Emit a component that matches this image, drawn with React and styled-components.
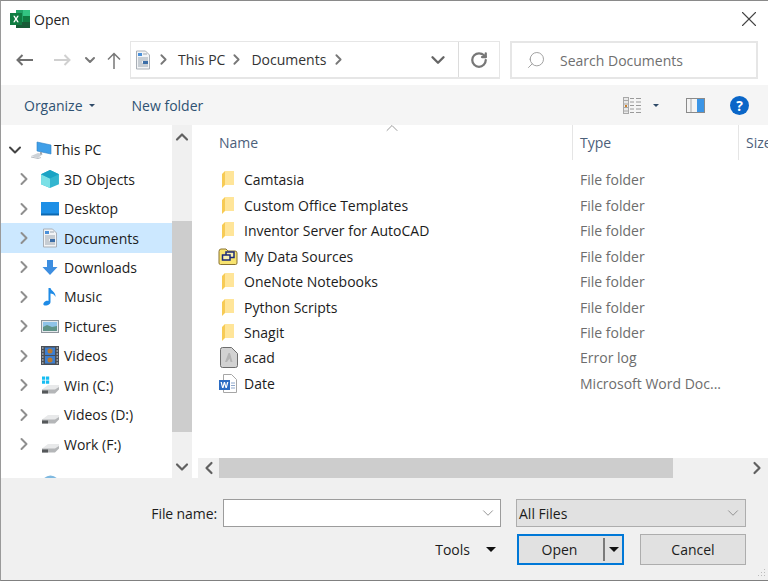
import styled, { createGlobalStyle } from 'styled-components';
import { X, ChevronDown, ChevronRight, ChevronUp, ChevronLeft, RotateCw, Search } from 'lucide-react';

const GlobalStyle = createGlobalStyle`
  html, body {
    margin: 0;
    padding: 0;
    background: #fff;
  }
  body {
    font-family: "Open Sans", "Liberation Sans", sans-serif;
    font-size: 14px;
    color: #1c1c1c;
  }
`;

const Dialog = styled.div`
  width: 768px;
  height: 581px;
  box-sizing: border-box;
  border-top: 1px solid #8a8a8a;
  border-left: 1px solid #9a9a9a;
  border-bottom: 1px solid #808080;
  display: flex;
  flex-direction: column;
  overflow: hidden;
`;

const TitleBar = styled.div`
  height: 34px;
  flex: none;
  display: flex;
  align-items: center;
  gap: 3px;
  padding: 2px 6px 0 9px;
  box-sizing: border-box;
`;

const TitleText = styled.span`
  flex: 1;
  color: #222;
`;

const NavRow = styled.div`
  height: 50px;
  flex: none;
  display: flex;
  padding: 6px 10px 6px 0;
  box-sizing: border-box;
`;

const NavButtons = styled.div`
  width: 129px;
  flex: none;
  display: flex;
  align-items: center;
  padding-left: 15px;
  box-sizing: border-box;
`;

const NavGlyph = styled.span`
  display: flex;
  margin-left: ${({ $ml }) => $ml || 0}px;
  svg {
    flex: none;
  }
`;

const AddressBar = styled.div`
  width: 370px;
  flex: none;
  display: flex;
  align-items: center;
  border: 2px solid #e6e6e6;
  border-width: 1px 1px 2px 1px;
  box-sizing: border-box;
  padding-left: 4px;
  color: #333;
`;

const CrumbSep = styled.span`
  display: flex;
  margin: 0 6px 0 ${({ $l }) => $l}px;
`;

const Spacer = styled.div`
  flex: 1;
`;

const RefreshCell = styled.div`
  width: 41px;
  height: 100%;
  border-left: 1px solid #dcdcdc;
  box-sizing: border-box;
  display: flex;
  align-items: center;
  justify-content: center;
  margin-left: 9px;
`;

const SearchBox = styled.div`
  width: 248px;
  margin-left: 10px;
  display: flex;
  align-items: center;
  gap: 14px;
  padding-left: 14px;
  border: 2px solid #e6e6e6;
  box-sizing: border-box;
  color: #6f6f6f;
`;

const Toolbar = styled.div`
  height: 40px;
  flex: none;
  background: #f5f5f5;
  display: flex;
  align-items: center;
  padding: 0 19px 0 23px;
  box-sizing: border-box;
  color: #2f5273;
`;

const ToolButton = styled.span`
  margin-right: ${({ $gap }) => $gap || 0}px;
  display: flex;
  align-items: center;
`;

const SmallCaret = styled.span`
  display: inline-block;
  width: 0;
  height: 0;
  margin-left: ${({ $ml }) => $ml || 0}px;
  border-left: ${({ $size }) => $size || 3}px solid transparent;
  border-right: ${({ $size }) => $size || 3}px solid transparent;
  border-top: ${({ $size }) => $size || 3}px solid ${({ $color }) => $color || '#2f4a68'};
`;

const Main = styled.div`
  flex: 1;
  min-height: 0;
  display: flex;
`;

const TreePane = styled.div`
  width: 171px;
  flex: none;
  overflow: hidden;
  padding-top: 10px;
  box-sizing: border-box;
`;

const TreeRow = styled.div`
  height: 29.45px;
  display: flex;
  align-items: center;
  padding-left: ${({ $top }) => ($top ? 8 : 17)}px;
  margin-top: ${({ $mt }) => $mt || 0}px;
  box-sizing: border-box;
  background: ${({ $selected }) => ($selected ? '#cce8ff' : 'transparent')};
  white-space: nowrap;
`;

const IconSlot = styled.span`
  width: ${({ $w }) => $w || 20}px;
  height: 20px;
  flex: none;
  margin-right: ${({ $mr }) => $mr || 0}px;
  display: flex;
  align-items: center;
  justify-content: ${({ $start }) => ($start ? 'flex-start' : 'center')};
  svg {
    flex: none;
  }
`;

const VScroll = styled.div`
  width: 20px;
  flex: none;
  background: #f0f0f0;
  display: flex;
  flex-direction: column;
  align-items: stretch;
  margin-right: 2px;
`;

const ScrollButton = styled.div`
  flex: none;
  height: ${({ $h }) => $h || 20}px;
  width: ${({ $w }) => $w || 'auto'};
  display: flex;
  align-items: center;
  justify-content: center;
  svg {
    flex: none;
  }
`;

const VThumb = styled.div`
  margin-top: 72px;
  height: 211px;
  background: #cdcdcd;
  flex: none;
`;

const FilePane = styled.div`
  flex: 1;
  min-width: 0;
  display: flex;
  flex-direction: column;
  position: relative;
  overflow: hidden;
`;

const SortCaret = styled.span`
  position: absolute;
  left: 188px;
  top: -7px;
`;

const HeaderRow = styled.div`
  height: 35px;
  flex: none;
  display: grid;
  grid-template-columns: 379px 166px 60px;
  color: #4c607a;
`;

const HeaderCell = styled.div`
  display: flex;
  align-items: center;
  padding-left: ${({ $pad }) => $pad}px;
  border-right: ${({ $last }) => ($last ? 'none' : '1px solid #e5e5e5')};
  box-sizing: border-box;
  white-space: nowrap;
`;

const FileList = styled.div`
  flex: 1;
  padding-top: 7.2px;
  min-height: 0;
`;

const FileRow = styled.div`
  height: 25.45px;
  display: grid;
  grid-template-columns: 379px 1fr;
  align-items: center;
`;

const FileName = styled.div`
  display: flex;
  align-items: center;
  gap: 6px;
  padding-left: 24px;
  white-space: nowrap;
`;

const FileType = styled.div`
  padding-left: 7px;
  color: #6d6d6d;
  white-space: nowrap;
`;

const HScroll = styled.div`
  height: 20px;
  flex: none;
  background: #f0f0f0;
  display: flex;
  align-items: center;
  margin-left: 4px;
`;

const HThumb = styled.div`
  width: 454px;
  height: 100%;
  background: #cdcdcd;
  margin-right: auto;
`;

const Footer = styled.div`
  height: 102px;
  flex: none;
  background: #f0f0f0;
  position: relative;
  padding: 21px 22px 0 0;
  box-sizing: border-box;
  display: flex;
  flex-direction: column;
  gap: 7px;
`;

const FooterRow = styled.div`
  display: flex;
  justify-content: flex-end;
  align-items: center;
`;

const FieldLabel = styled.span`
  margin-right: 6px;
  letter-spacing: -0.1px;
`;

const NameInput = styled.div`
  width: 278px;
  height: 28px;
  box-sizing: border-box;
  background: #fff;
  border: 1px solid #9c9c9c;
  display: flex;
  align-items: center;
  justify-content: flex-end;
  padding-right: 3px;
  margin-right: 15px;
`;

const TypeSelect = styled.div`
  width: 230px;
  height: 28px;
  box-sizing: border-box;
  background: #e1e1e1;
  border: 1px solid #adadad;
  display: flex;
  align-items: center;
  justify-content: space-between;
  padding: 0 3px 0 2px;
`;

const ToolsLabel = styled.div`
  display: flex;
  align-items: center;
  gap: 16px;
  margin-right: 21px;
`;

const DialogButton = styled.div`
  width: ${({ $w }) => $w}px;
  height: 31px;
  box-sizing: border-box;
  background: #e1e1e1;
  border: ${({ $primary }) => ($primary ? '2px solid #0078d7' : '1px solid #adadad')};
  display: flex;
  align-items: center;
  justify-content: center;
  margin-right: ${({ $gap }) => $gap || 0}px;
`;

const SplitLabel = styled.span`
  flex: 1;
  text-align: center;
  padding-right: 3px;
`;

const SplitArrow = styled.span`
  width: 19px;
  height: calc(100% - 4px);
  box-sizing: border-box;
  border-left: 2px solid #7a7a7a;
  display: flex;
  align-items: center;
  justify-content: center;
`;

const Grip = styled.svg`
  position: absolute;
  right: 2px;
  bottom: 2px;
`;

function ExcelIcon() {
  return (
    <svg width="21" height="20" viewBox="0 0 21 20">
      <path d="M6 1h14v18H6z" fill="#21a366" />
      <path d="M13 1h7v6h-7z" fill="#33c481" />
      <path d="M13 7h7v6h-7z" fill="#107c41" />
      <path d="M6 13h14v6H6z" fill="#185c37" />
      <rect x="0" y="4" width="12" height="12" fill="#107c41" />
      <path d="M3.2 6.800h1.600L6 9l1.200-2.200h1.600L6.900 10l1.900 3.200H7.200L6 11l-1.200 2.200H3.200L5.100 10z" fill="#fff" />
    </svg>
  );
}

function BackArrow({ color, flip }) {
  return (
    <svg width="17" height="12" viewBox="0 0 17 12" style={flip ? { transform: 'scaleX(-1)' } : undefined}>
      <path d="M1.500 6H17M6.500 1L1.500 6l5 5" fill="none" stroke={color} strokeWidth="2" />
    </svg>
  );
}

function UpArrow() {
  return (
    <svg width="14" height="17" viewBox="0 0 14 17">
      <path d="M7 1.500V17M1 7.500l6-6 6 6" fill="none" stroke="#777" strokeWidth="1.500" />
    </svg>
  );
}

function DocPageIcon() {
  return (
    <svg width="16" height="20" viewBox="0 0 16 20">
      <path d="M1.500 1h9l4 4v14h-13z" fill="#f2f4f6" stroke="#a9afb6" />
      <path d="M3 3h4v3H3z" fill="#4a90d9" />
      <path d="M8 4h4M3 8h10M3 10h10M3 12h4M3 14h10M3 16h10" stroke="#9aa5b0" />
      <path d="M8 11h5v3H8z" fill="#3b6ea8" />
    </svg>
  );
}

function PcIcon() {
  return (
    <svg width="22" height="18" viewBox="0 0 22 18">
      <path d="M7 1l14 3v9L7 10z" fill="#3f9fe8" stroke="#2b7fc4" strokeWidth=".6" />
      <path d="M1 15l7-3 5 1-5 4z" fill="#cdd2d7" />
      <path d="M11 11v2.500" stroke="#a3a9b0" strokeWidth="2" />
      <path d="M1 16l7 1.500 3-1" stroke="#b7bcc2" fill="none" />
    </svg>
  );
}

function CubeIcon() {
  return (
    <svg width="20" height="20" viewBox="0 0 19 19">
      <path d="M9.500 1L18 5v9.500L9.500 18 1 14.500V5z" fill="#33b5cf" />
      <path d="M1 5l8.500 4v9L1 14.500z" fill="#7be0e6" />
      <path d="M9.500 1L18 5l-8.500 4L1 5z" fill="#1aa3c4" />
    </svg>
  );
}

function DesktopIcon() {
  return (
    <svg width="18" height="14" viewBox="0 0 18 14">
      <rect width="18" height="13" fill="#1d8fe6" />
      <rect y="11.500" width="18" height="2" fill="#0c68b0" />
    </svg>
  );
}

function DownloadIcon() {
  return (
    <svg width="16" height="17" viewBox="0 0 16 17">
      <path d="M5 1h6v7h4.500L8 16 .5 8H5z" fill="#3d8ee0" />
    </svg>
  );
}

function MusicIcon() {
  return (
    <svg width="14" height="19" viewBox="0 0 14 19">
      <path d="M5.500 1h2c.5 3 5.500 4 5 9-1-2.500-3-3.500-5-3.500V15c0 2-2.500 3.500-5 3.500S0 17 1 15.500s3-2 4.500-1.500z" fill="#1f8be6" />
    </svg>
  );
}

function PictureIcon() {
  return (
    <svg width="18" height="13" viewBox="0 0 18 13">
      <rect x=".5" y=".5" width="17" height="12" fill="#e4e8ec" stroke="#8e959c" />
      <rect x="2" y="2" width="14" height="5" fill="#8fc3e8" />
      <path d="M2 7l4-2 5 2 5-1v5H2z" fill="#5f9388" />
    </svg>
  );
}

function FilmIcon() {
  return (
    <svg width="18" height="19" viewBox="0 0 18 19">
      <rect width="18" height="19" fill="#4a4f55" />
      <path d="M1 2h1.500M1 5h1.500M1 8h1.500M1 11h1.500M1 14h1.500M1 17h1.500M15.500 2H17M15.500 5H17M15.500 8H17M15.500 11H17M15.500 14H17M15.500 17H17" stroke="#dfe3e7" />
      <rect x="4" y="1.500" width="10" height="7.500" fill="#3d7fd0" />
      <rect x="4" y="10" width="10" height="7.500" fill="#3d7fd0" />
      <circle cx="9" cy="5" r="2.500" fill="#b9792f" />
      <circle cx="9" cy="14" r="2.500" fill="#b9792f" />
    </svg>
  );
}

function DriveIcon({ win }) {
  return (
    <svg width="19" height="20" viewBox="0 0 19 20">
      {win && <path d="M1 1.500h3.200v3.200H1zM5 1.500h3.200v3.200H5zM1 5.500h3.200v3.200H1zM5 5.500h3.200v3.200H5z" fill="#17bdf2" />}
      <path d="M1 14.500L7 10h11v4l-4 2H1z" fill="#e8e9ea" />
      <path d="M1 14.500h13l4-2.500v2.500L14 18.500H1z" fill="#b4b6b8" />
      <path d="M1 15.500h6v3H1z" fill="#55585a" />
    </svg>
  );
}

function GlobeIcon() {
  return (
    <svg width="19" height="19" viewBox="0 0 19 19">
      <circle cx="9.500" cy="9.500" r="9" fill="#7fb9e0" />
      <path d="M4 3q4 2 3 6t5 2 3-6" fill="#b9dcf2" />
    </svg>
  );
}

function FolderIcon() {
  return (
    <svg width="14" height="19" viewBox="0 0 14 19">
      <path d="M4 1h9v14H4z" fill="#ffe599" />
      <path d="M1 4l3-3v14l-3 3z" fill="#f7cb55" />
    </svg>
  );
}

function DataSourceIcon() {
  return (
    <svg width="20" height="17" viewBox="0 0 20 17">
      <path d="M1 3.500Q1 1 3 1h5l2 2h7q2 0 2 2v10q0 1.500-1.500 1.500h-15Q1 16.500 1 15z" fill="#f8e470" stroke="#8a7230" />
      <rect x="8" y="4" width="8" height="5.500" fill="#f8f0b0" stroke="#1c2a78" strokeWidth="1.500" />
      <rect x="4.500" y="7" width="7.500" height="5" fill="#f8f0b0" stroke="#1c2a78" strokeWidth="1.500" />
    </svg>
  );
}

function LogIcon() {
  return (
    <svg width="19" height="21" viewBox="0 0 19 21">
      <path d="M1.500 2.500q0-2 2-2h9l6 6v12q0 2-2 2h-13q-2 0-2-2z" fill="#d2d2d2" stroke="#6d6d6d" />
      <path d="M6 15l3.500-9h1.500l2.500 9h-2l-1-3.500-2.500 3.500z" fill="#b4b4b4" />
    </svg>
  );
}

function WordIcon() {
  return (
    <svg width="18" height="19" viewBox="0 0 18 19">
      <path d="M4.500 .5h8l5 5v13h-13z" fill="#fff" stroke="#a6a6a6" />
      <path d="M12 9h4M12 11.500h4M12 14h4" stroke="#8fa8cc" />
      <rect y="6" width="11" height="10" fill="#2b6cc4" />
      <path d="M1.500 8h1.400l.8 4.200L4.800 8h1.300l1 4.200L8 8h1.400l-1.600 6H6.500l-1-3.800-1 3.800H3.100z" fill="#fff" />
    </svg>
  );
}

function ViewsIcon() {
  return (
    <svg width="18" height="17" viewBox="0 0 18 17">
      <rect x=".5" y=".5" width="5" height="16" fill="#e9e9e9" stroke="#a8a8a8" />
      <path d="M1 3.500h4M1 7h4M1 10.500h4M1 14h4" stroke="#a8a8a8" />
      <rect x="2" y="8" width="2" height="2" fill="#c97f2a" />
      <path d="M7 1.500h4M13 1.500h5M7 5h4M13 5h5M7 8.500h4M13 8.500h5M7 12h4M13 12h5M7 15.500h4M13 15.500h5" stroke="#9a9a9a" />
    </svg>
  );
}

function PaneIcon() {
  return (
    <svg width="19" height="15" viewBox="0 0 19 15">
      <rect x=".5" y=".5" width="18" height="14" fill="#f4f4f4" stroke="#8a8a8a" />
      <path d="M5 1v13" stroke="#a8a8a8" />
      <rect x="11" y="1" width="7" height="13" fill="#3b95e6" />
    </svg>
  );
}

function HelpIcon() {
  return (
    <svg width="19" height="19" viewBox="0 0 19 19">
      <circle cx="9.500" cy="9.500" r="9.500" fill="#0a66c8" />
      <text x="9.500" y="14.500" textAnchor="middle" fontSize="14" fontWeight="700" fontFamily="Open Sans, sans-serif" fill="#fff">?</text>
    </svg>
  );
}

const treeItems = [
  { label: '3D Objects', icon: <CubeIcon /> },
  { label: 'Desktop', icon: <DesktopIcon /> },
  { label: 'Documents', icon: <DocPageIcon />, selected: true },
  { label: 'Downloads', icon: <DownloadIcon /> },
  { label: 'Music', icon: <MusicIcon /> },
  { label: 'Pictures', icon: <PictureIcon /> },
  { label: 'Videos', icon: <FilmIcon /> },
  { label: 'Win (C:)', icon: <DriveIcon win /> },
  { label: 'Videos (D:)', icon: <DriveIcon /> },
  { label: 'Work (F:)', icon: <DriveIcon /> },
];

const files = [
  { name: 'Camtasia', type: 'File folder', icon: <FolderIcon /> },
  { name: 'Custom Office Templates', type: 'File folder', icon: <FolderIcon /> },
  { name: 'Inventor Server for AutoCAD', type: 'File folder', icon: <FolderIcon /> },
  { name: 'My Data Sources', type: 'File folder', icon: <DataSourceIcon /> },
  { name: 'OneNote Notebooks', type: 'File folder', icon: <FolderIcon /> },
  { name: 'Python Scripts', type: 'File folder', icon: <FolderIcon /> },
  { name: 'Snagit', type: 'File folder', icon: <FolderIcon /> },
  { name: 'acad', type: 'Error log', icon: <LogIcon /> },
  { name: 'Date', type: 'Microsoft Word Doc...', icon: <WordIcon /> },
];

export default function App() {
  return (
    <>
      <GlobalStyle />
      <Dialog>
        <TitleBar>
          <ExcelIcon />
          <TitleText>Open</TitleText>
          <X size={26} color="#444" strokeWidth={1} />
        </TitleBar>

        <NavRow>
          <NavButtons>
            <NavGlyph><BackArrow color="#6f6f6f" /></NavGlyph>
            <NavGlyph $ml={21}><BackArrow color="#d0d0d0" flip /></NavGlyph>
            <NavGlyph $ml={11}><ChevronDown size={16} color="#777" strokeWidth={3} /></NavGlyph>
            <NavGlyph $ml={9}><UpArrow /></NavGlyph>
          </NavButtons>
          <AddressBar>
            <DocPageIcon />
            <CrumbSep $l={4}><ChevronRight size={17} color="#777" strokeWidth={2.6} /></CrumbSep>
            <span>This PC</span>
            <CrumbSep $l={3}><ChevronRight size={17} color="#777" strokeWidth={2.6} /></CrumbSep>
            <span>Documents</span>
            <CrumbSep $l={4}><ChevronRight size={17} color="#777" strokeWidth={2.6} /></CrumbSep>
            <Spacer />
            <ChevronDown size={22} color="#666" strokeWidth={2.6} />
            <RefreshCell>
              <RotateCw size={18} color="#777" strokeWidth={3} />
            </RefreshCell>
          </AddressBar>
          <SearchBox>
            <Search size={20} color="#999" strokeWidth={1.1} style={{ transform: 'scaleX(-1)' }} />
            Search Documents
          </SearchBox>
        </NavRow>

        <Toolbar>
          <ToolButton $gap={37}>
            Organize
            <SmallCaret $ml={6} />
          </ToolButton>
          <ToolButton>New folder</ToolButton>
          <Spacer />
          <ToolButton $gap={12}><ViewsIcon /></ToolButton>
          <ToolButton $gap={27}><SmallCaret /></ToolButton>
          <ToolButton $gap={25}><PaneIcon /></ToolButton>
          <ToolButton><HelpIcon /></ToolButton>
        </Toolbar>

        <Main>
          <TreePane>
            <TreeRow $top>
              <IconSlot $w={12} $mr={9}><ChevronDown size={20} color="#444" strokeWidth={2.4} /></IconSlot>
              <IconSlot $w={24} $start><PcIcon /></IconSlot>
              This PC
            </TreeRow>
            {treeItems.map((item) => (
              <TreeRow key={item.label} $selected={item.selected}>
                <IconSlot $w={12} $mr={10}><ChevronRight size={20} color="#8f8f8f" strokeWidth={2.4} /></IconSlot>
                <IconSlot $mr={4}>{item.icon}</IconSlot>
                {item.label}
              </TreeRow>
            ))}
            <TreeRow $mt={11}>
              <IconSlot $w={12} $mr={10} />
              <IconSlot $mr={4}><GlobeIcon /></IconSlot>
            </TreeRow>
          </TreePane>

          <VScroll>
            <ScrollButton $h={24}><ChevronUp size={20} color="#606060" strokeWidth={2.6} /></ScrollButton>
            <VThumb />
            <Spacer />
            <ScrollButton $h={22}><ChevronDown size={20} color="#606060" strokeWidth={2.6} /></ScrollButton>
          </VScroll>

          <FilePane>
            <SortCaret>
              <ChevronUp size={20} color="#9a9a9a" strokeWidth={1.2} />
            </SortCaret>
            <HeaderRow>
              <HeaderCell $pad={25}>Name</HeaderCell>
              <HeaderCell $pad={7}>Type</HeaderCell>
              <HeaderCell $pad={7} $last>Size</HeaderCell>
            </HeaderRow>
            <FileList>
              {files.map((file) => (
                <FileRow key={file.name}>
                  <FileName>
                    <IconSlot>{file.icon}</IconSlot>
                    {file.name}
                  </FileName>
                  <FileType>{file.type}</FileType>
                </FileRow>
              ))}
            </FileList>
            <HScroll>
              <ScrollButton $w="21px"><ChevronLeft size={20} color="#606060" strokeWidth={2.6} /></ScrollButton>
              <HThumb />
              <ScrollButton $w="22px"><ChevronRight size={20} color="#606060" strokeWidth={2.6} /></ScrollButton>
            </HScroll>
          </FilePane>
        </Main>

        <Footer>
          <FooterRow>
            <FieldLabel>File name:</FieldLabel>
            <NameInput><ChevronDown size={18} color="#8a8a8a" strokeWidth={1.2} /></NameInput>
            <TypeSelect>
              All Files
              <ChevronDown size={18} color="#8a8a8a" strokeWidth={1.2} />
            </TypeSelect>
          </FooterRow>
          <FooterRow>
            <ToolsLabel>
              Tools
              <SmallCaret $size={5} $color="#111" />
            </ToolsLabel>
            <DialogButton $w={107} $gap={16} $primary>
              <SplitLabel>Open</SplitLabel>
              <SplitArrow><SmallCaret $size={5} $color="#111" /></SplitArrow>
            </DialogButton>
            <DialogButton $w={106}>Cancel</DialogButton>
          </FooterRow>
          <Grip width="10" height="10" viewBox="0 0 10 10">
            <path d="M8 1h1v1H8zM5 4h1v1H5zM8 4h1v1H8zM2 7h1v1H2zM5 7h1v1H5zM8 7h1v1H8z" fill="#bcbcbc" />
          </Grip>
        </Footer>
      </Dialog>
    </>
  );
}
